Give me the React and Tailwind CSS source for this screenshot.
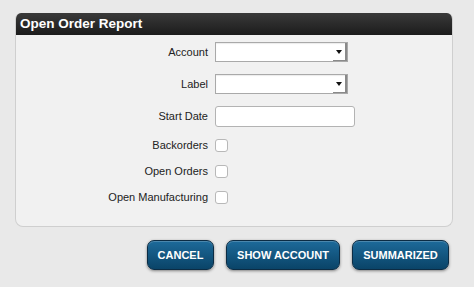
import React from "react";

const Row = ({ label, children, className = "" }) => (
  <div className={`flex items-center ${className}`}>
    <div className="w-[199px] pr-[7px] text-right text-[11px] text-[#222]">{label}</div>
    {children}
  </div>
);

const Select = () => (
  <div className="relative h-[20px] w-[133px] border border-[#a9a9a9] bg-white shadow-[inset_0_1px_1px_rgba(0,0,0,0.08)]">
    <div className="absolute right-0 top-0 flex h-full w-[14px] items-center justify-center border-r-2 border-b border-[#8a8a8a]">
      <span className="block h-0 w-0 border-x-[3.5px] border-t-[4px] border-x-transparent border-t-[#111]" />
    </div>
  </div>
);

const Checkbox = () => (
  <div className="h-[13px] w-[13px] rounded-[3px] border border-[#b8b8b8] bg-white" />
);

const Button = ({ children, className = "" }) => (
  <button
    className={`h-[30px] rounded-[7px] border border-[#0c2c44] bg-gradient-to-b from-[#1d6a9a] to-[#0a4468] text-[11px] font-bold text-white shadow-[0_1px_3px_rgba(0,0,0,0.45),inset_0_1px_0_rgba(255,255,255,0.2)] ${className}`}
  >
    {children}
  </button>
);

export default function App() {
  return (
    <div
      className="h-[287px] w-[474px] bg-[#e9e9e9] pt-[13px]"
      style={{ fontFamily: "'Liberation Sans', Arial, sans-serif" }}
    >
      <div className="ml-[15px] w-[438px] overflow-hidden rounded-b-[8px] rounded-t-[6px] border-x border-b border-[#cfcfcf] bg-[#f1f1f1]">
        <div className="flex h-[22px] items-center bg-gradient-to-b from-[#3a3a3a] to-[#1c1c1c] pl-[4px] text-[13.5px] font-bold text-white">
          Open Order Report
        </div>
        <div className="pb-[15px] pt-[1px]">
          <Row label="Account" className="h-[32px]">
            <Select />
          </Row>
          <Row label="Label" className="h-[32px]">
            <Select />
          </Row>
          <Row label="Start Date" className="h-[32px]">
            <div className="h-[21px] w-[140px] rounded-[3px] border border-[#b3b3b3] bg-white" />
          </Row>
          <Row label="Backorders" className="h-[26px]">
            <Checkbox />
          </Row>
          <Row label="Open Orders" className="h-[26px]">
            <Checkbox />
          </Row>
          <Row label="Open Manufacturing" className="h-[27px]">
            <Checkbox />
          </Row>
        </div>
      </div>
      <div className="mt-[13px] flex gap-[12px] pl-[147px]">
        <Button className="w-[67px]">CANCEL</Button>
        <Button className="w-[114px]">SHOW ACCOUNT</Button>
        <Button className="w-[97px]">SUMMARIZED</Button>
      </div>
    </div>
  );
}
